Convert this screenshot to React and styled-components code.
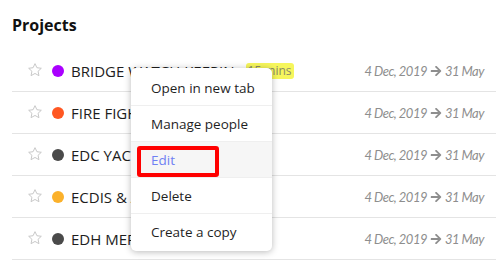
import React from "react";
import styled, { createGlobalStyle } from "styled-components";
import { FaArrowRight } from "react-icons/fa";

const GlobalStyle = createGlobalStyle`
  html, body {
    margin: 0;
    padding: 0;
    background: #ffffff;
  }
  body {
    font-family: "Open Sans", "Noto Sans", sans-serif;
    color: #222;
  }
`;

const Page = styled.div`
  position: relative;
  width: 496px;
  height: 266px;
  overflow: hidden;
  padding-left: 12px;
  box-sizing: border-box;
`;

const Title = styled.h2`
  margin: 0;
  padding-top: 14px;
  height: 50px;
  box-sizing: border-box;
  font-size: 16px;
  font-weight: 700;
  color: #111;
  line-height: 22px;
`;

const List = styled.ul`
  list-style: none;
  margin: 0;
  padding: 0;
`;

const Row = styled.li`
  display: flex;
  align-items: center;
  height: 42px;
  border-bottom: 1px solid #e4e4e4;
  padding: 0 12px 0 15px;
  box-sizing: border-box;
`;

const StarIcon = styled.svg`
  width: 16px;
  height: 16px;
  flex-shrink: 0;
  margin-top: -2px;
`;

const Dot = styled.span`
  width: 12px;
  height: 12px;
  border-radius: 50%;
  background: ${(p) => p.$color};
  margin-left: 9px;
  margin-right: 7px;
  flex-shrink: 0;
`;

const Name = styled.span`
  font-size: 15px;
  color: #1d1d1d;
  white-space: nowrap;
`;

const Badge = styled.span`
  margin-left: 11px;
  background: #f6f65c;
  color: #8a8a6a;
  font-size: 12px;
  padding: 0 2px;
  border-radius: 3px;
  line-height: 16px;
`;

const Dates = styled.span`
  margin-left: auto;
  display: flex;
  align-items: center;
  gap: 3px;
  font-family: Lato, "Open Sans", sans-serif;
  font-style: italic;
  font-size: 13px;
  letter-spacing: -0.5px;
  color: #8e8e8e;
  white-space: nowrap;
  svg {
    width: 12px;
    height: 12px;
    color: #8e8e8e;
  }
`;

const Menu = styled.div`
  position: absolute;
  left: 131px;
  top: 68px;
  width: 141px;
  padding: 2px 0;
  background: #fff;
  border-radius: 5px;
  box-shadow: 0 1px 7px rgba(0, 0, 0, 0.28);
`;

const MenuItem = styled.div`
  position: relative;
  height: 35px;
  display: flex;
  align-items: center;
  padding-left: 20px;
  font-size: 13.5px;
  white-space: nowrap;
  color: ${(p) => (p.$active ? "#6f80f3" : "#1f1f1f")};
  background: ${(p) => (p.$active ? "#f6f6f6" : "transparent")};
  border-bottom: ${(p) => (p.$last ? "none" : "1px solid #efefef")};
`;

const Highlight = styled.span`
  position: absolute;
  left: 6px;
  top: 4px;
  width: 82px;
  height: 31px;
  border: 4px solid #ff0000;
  border-radius: 3px;
  box-sizing: border-box;
`;

const Star = () => (
  <StarIcon viewBox="0 0 24 24">
    <polygon
      points="12,2.5 14.9,8.6 21.5,9.4 16.6,13.9 17.9,20.5 12,17.2 6.1,20.5 7.4,13.9 2.5,9.4 9.1,8.6"
      fill="none"
      stroke="#c4c4c4"
      strokeWidth="1.4"
      strokeLinejoin="miter"
    />
  </StarIcon>
);

const projects = [
  { name: "BRIDGE WATCH KEEPIN", color: "#aa00ff", badge: "15 mins" },
  { name: "FIRE FIGHTING", color: "#ff5722" },
  { name: "EDC YACHT", color: "#4a4a4a" },
  { name: "ECDIS & ARPA", color: "#fbb12b" },
  { name: "EDH MERCHANT", color: "#4a4a4a" },
];

const menuItems = ["Open in new tab", "Manage people", "Edit", "Delete", "Create a copy"];

export default function App() {
  return (
    <Page>
      <GlobalStyle />
      <Title>Projects</Title>
      <List>
        {projects.map((p) => (
          <Row key={p.name}>
            <Star />
            <Dot $color={p.color} />
            <Name>{p.name}</Name>
            {p.badge && <Badge>{p.badge}</Badge>}
            <Dates>
              4 Dec, 2019 <FaArrowRight /> 31 May
            </Dates>
          </Row>
        ))}
      </List>
      <Menu>
        {menuItems.map((label, i) => (
          <MenuItem
            key={label}
            $active={label === "Edit"}
            $last={i === menuItems.length - 1}
          >
            {label}
            {label === "Edit" && <Highlight />}
          </MenuItem>
        ))}
      </Menu>
    </Page>
  );
}
